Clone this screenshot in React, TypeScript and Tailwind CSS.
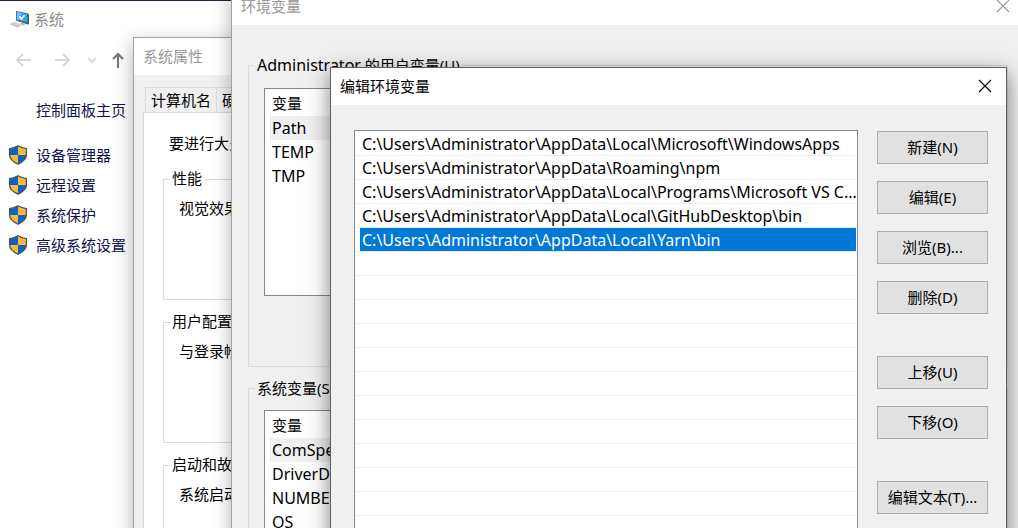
import type { ReactNode } from 'react'

const controlPanelLinks = ['设备管理器', '远程设置', '系统保护', '高级系统设置']

const userVariables = ['Path', 'TEMP', 'TMP']
const systemVariables = ['ComSpec', 'DriverData', 'NUMBER_OF', 'OS']

const paths = [
  'C:\\Users\\Administrator\\AppData\\Local\\Microsoft\\WindowsApps',
  'C:\\Users\\Administrator\\AppData\\Roaming\\npm',
  'C:\\Users\\Administrator\\AppData\\Local\\Programs\\Microsoft VS C...',
  'C:\\Users\\Administrator\\AppData\\Local\\GitHubDesktop\\bin',
  'C:\\Users\\Administrator\\AppData\\Local\\Yarn\\bin',
]
const selectedPath = 4
const pathRows = Array.from({ length: 17 }, (_, i) => paths[i] ?? '')

const buttonGroups = [
  ['新建(N)', '编辑(E)', '浏览(B)...', '删除(D)'],
  ['上移(U)', '下移(O)'],
  ['编辑文本(T)...'],
]

function ShieldIcon() {
  return (
    <svg width="20" height="20" viewBox="0 0 20 20" className="shrink-0" aria-hidden="true">
      <defs>
        <clipPath id="shield">
          <path d="M10 1C7.500 2.700 4.800 3.500 1.800 3.700V10c0 4.200 3.600 7 8.200 9 4.600-2 8.200-4.800 8.200-9V3.700C15.200 3.500 12.500 2.700 10 1Z" />
        </clipPath>
      </defs>
      <g clipPath="url(#shield)">
        <rect width="20" height="20" fill="#fdb73a" />
        <rect width="10" height="10" fill="#0a64c8" />
        <rect x="10" y="10" width="10" height="10" fill="#0a64c8" />
      </g>
      <path
        d="M10 .8C7.500 2.500 4.800 3.400 1.600 3.600V10c0 4.200 3.800 7 8.400 9.200 4.600-2.200 8.400-5 8.400-9.200V3.600C15.200 3.400 12.500 2.500 10 .8Z"
        fill="none"
        stroke="#4c5256"
        strokeWidth="1.300"
      />
    </svg>
  )
}

function ComputerIcon() {
  return (
    <svg width="20" height="18" viewBox="0 0 20 18" className="shrink-0" aria-hidden="true">
      <path d="M6 1 18 3.500 19 4.500V14L17.500 14.500 6 10.500Z" fill="#4d5b68" />
      <path d="M6.800 1.800 17.200 4.200V12.600L6.800 9.600Z" fill="#2fa8f0" />
      <path d="M6.800 1.800 12 3 8.500 10 6.800 9.600Z" fill="#63c3f7" />
      <path d="m9.300 6.300 2 2.600 3.300-3.700" fill="none" stroke="#fff" strokeWidth="1.600" />
      <path d="m11 12.500 4 1.200-.5 2-4.500-1Z" fill="#b9bfc4" />
      <path d="M.5 13.500 4.500 11.500 12 14.800 8.500 17.300Z" fill="#cfd3d6" />
      <path d="M.5 13.500 8.500 16.500v1L.5 14.500Z" fill="#a9afb4" />
    </svg>
  )
}

function NavButton({ label, path, width, className }: { label: string; path: string; width: number; className?: string }) {
  return (
    <button type="button" aria-label={label} className={className}>
      <svg width={width} height="16" viewBox={`0 0 ${width} 16`} fill="none" stroke="currentColor" strokeWidth="2">
        <path d={path} />
      </svg>
    </button>
  )
}

function CloseButton({ className }: { className: string }) {
  return (
    <button type="button" aria-label="关闭" className={className}>
      <svg width="14" height="14" viewBox="0 0 14 14" fill="none" stroke="currentColor" strokeWidth="1.100">
        <path d="M1 1 13 13M13 1 1 13" />
      </svg>
    </button>
  )
}

function GroupBox({ title, className, children }: { title: ReactNode; className: string; children: ReactNode }) {
  return (
    <fieldset className={`min-w-0 border border-[#dcdcdc] pl-[15px] ${className}`}>
      <legend className="-ml-[9px] px-[2px] pb-[2px] leading-[18px]">{title}</legend>
      {children}
    </fieldset>
  )
}

function VariableTable({ names }: { names: string[] }) {
  return (
    <table className="w-full border-collapse text-left">
      <thead>
        <tr className="h-[27px]">
          <th className="pl-[7px] pt-px font-normal">变量</th>
        </tr>
      </thead>
      <tbody className="text-base">
        {names.map((name, index) => (
          <tr key={name} className="h-6">
            <td className="pl-[5px]">
              <div className={index === 0 ? 'bg-[#f0f0f0] pl-[2px] leading-6' : 'pl-[2px] leading-6'}>{name}</div>
            </td>
          </tr>
        ))}
      </tbody>
    </table>
  )
}

function SystemPage() {
  return (
    <main className="h-full border-t border-[#1f2940] bg-white">
      <header className="flex items-center gap-1 pl-[10px] pt-2 text-[#8c8c8c]">
        <ComputerIcon />
        <h1>系统</h1>
      </header>
      <nav className="flex items-center pl-4 pt-[23px] text-[#d8d8d8]">
        <NavButton label="后退" path="M15 8H1M7 2 1 8l6 6" width={16} className="mr-[23px]" />
        <NavButton label="前进" path="M0 8h14M8 2l6 6-6 6" width={16} className="mr-4" />
        <NavButton label="最近" path="m1 6 4 4 4-4" width={10} className="mr-[15px]" />
        <NavButton label="向上" path="M6 16V2M1 7l5-5 5 5" width={12} className="text-[#757575]" />
      </nav>
      <aside className="pt-[31px] text-[#12124f]">
        <a href="#home" className="block pl-9 leading-[22px]">控制面板主页</a>
        <ul className="pt-[19px]">
          {controlPanelLinks.map((label) => (
            <li key={label}>
              <a href="#settings" className="flex h-[30px] items-center gap-2 pl-2">
                <ShieldIcon />
                {label}
              </a>
            </li>
          ))}
        </ul>
      </aside>
    </main>
  )
}

function PropertiesWindow() {
  return (
    <section className="absolute -bottom-10 left-[133px] top-[37px] w-60 overflow-hidden whitespace-nowrap border border-[#a2a2a2] bg-[#f0f0f0] shadow-[0_6px_18px_rgba(0,0,0,0.3)]">
      <h2 className="h-[37px] bg-white pl-[9px] leading-[37px] text-[#999]">系统属性</h2>
      <div role="tablist" className="ml-[11px] mt-3 flex h-[25px] border-l border-t border-[#dcdcdc]">
        <button type="button" role="tab" aria-selected="false" className="w-[71px] border-r border-[#dcdcdc]">
          计算机名
        </button>
        <button type="button" role="tab" aria-selected="false" className="px-[5px]">
          硬件
        </button>
      </div>
      <div className="ml-[9px] h-full border border-[#dcdcdc] bg-white pl-[19px] pt-[18px]">
        <p className="pl-[6px] leading-6">要进行大多数</p>
        <GroupBox title="性能" className="mt-[14px] h-[131px]">
          <p className="pt-[7px] leading-6">视觉效果</p>
        </GroupBox>
        <GroupBox title="用户配置" className="mt-3 h-[131px]">
          <p className="pt-[7px] leading-6">与登录帐户</p>
        </GroupBox>
        <GroupBox title="启动和故障" className="mt-3 h-[131px]">
          <p className="pt-[7px] leading-6">系统启动</p>
        </GroupBox>
      </div>
    </section>
  )
}

function VariablesWindow() {
  return (
    <section className="absolute -bottom-40 -right-3 -top-3 left-[231px] overflow-hidden whitespace-nowrap border border-[#a2a2a2] bg-[#f0f0f0] shadow-[0_6px_18px_rgba(0,0,0,0.3)]">
      <header className="flex h-9 items-center justify-between bg-white pb-[2px] pl-[9px] text-[#999]">
        <h2>环境变量</h2>
        <CloseButton className="mr-[19px]" />
      </header>
      <div className="ml-4 mr-[21px] pt-[30px] [&_legend]:pb-0 [&_legend]:leading-5">
        <GroupBox
          title={
            <>
              <span className="text-base leading-5">Administrator</span> 的用户变量(U)
            </>
          }
          className="h-[312px]"
        >
          <div className="mr-4 mt-[13px] h-[208px] border border-[#828790] bg-white">
            <VariableTable names={userVariables} />
          </div>
        </GroupBox>
        <GroupBox title="系统变量(S)" className="mt-[11px] h-[312px]">
          <div className="mr-4 mt-3 h-[240px] border border-[#828790] bg-white">
            <VariableTable names={systemVariables} />
          </div>
        </GroupBox>
      </div>
    </section>
  )
}

function EditWindow() {
  return (
    <section className="absolute -bottom-20 left-[330px] right-[11px] top-[67px] overflow-hidden border border-[#606060] bg-[#f0f0f0] shadow-[0_6px_20px_rgba(0,0,0,0.5)]">
      <header className="flex h-[37px] items-center justify-between bg-white pb-[2px] pl-[9px]">
        <h2>编辑环境变量</h2>
        <CloseButton className="mr-[14px]" />
      </header>
      <div className="flex items-start gap-[19px] pl-[23px] pr-[18px] pt-[25px]">
        <ul
          role="listbox"
          aria-label="编辑环境变量"
          className="min-w-0 flex-1 border border-[#828790] bg-white px-px text-base"
        >
          {pathRows.map((path, index) => (
            <li
              key={index}
              role="option"
              aria-selected={index === selectedPath}
              className="h-6 border-b border-[#ededed] pl-1 first:h-[25px] first:pt-px"
            >
              <div
                className={
                  index === selectedPath
                    ? 'h-[23px] whitespace-nowrap bg-[#0078d7] pl-[2px] leading-6 text-white'
                    : 'h-[23px] whitespace-nowrap pl-[2px] leading-6'
                }
              >
                {path}
              </div>
            </li>
          ))}
        </ul>
        <div className="flex w-[111px] flex-col gap-[42px] pt-px">
          {buttonGroups.map((group) => (
            <div key={group[0]} className="flex flex-col gap-[17px]">
              {group.map((label) => (
                <button
                  key={label}
                  type="button"
                  className="h-[33px] whitespace-nowrap border border-[#adadad] bg-[#e1e1e1] pb-[2px]"
                >
                  {label}
                </button>
              ))}
            </div>
          ))}
        </div>
      </div>
    </section>
  )
}

export default function App() {
  return (
    <div className="relative h-screen overflow-hidden bg-white font-['Noto_Sans','Noto_Sans_CJK_SC',sans-serif] text-[15px] leading-5 text-black">
      <SystemPage />
      <PropertiesWindow />
      <VariablesWindow />
      <EditWindow />
    </div>
  )
}
